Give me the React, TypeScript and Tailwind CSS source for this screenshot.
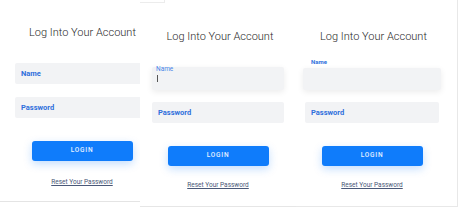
import type { ReactNode } from "react";

const font = { fontFamily: "Roboto, 'Liberation Sans', sans-serif" };

function Title({ className = "" }: { className?: string }) {
  return <h1 className={`text-center text-[11px] font-light leading-[16px] text-[#2a2a2a] ${className}`}>Log Into Your Account</h1>;
}

function Field({ className = "", children }: { className?: string; children?: ReactNode }) {
  return <div className={`rounded-[2px] bg-[#f2f3f5] ${className}`}>{children}</div>;
}

function Label({ children }: { children: ReactNode }) {
  return <span className="text-[7.5px] font-bold leading-[8px] text-[#2f6fdc]">{children}</span>;
}

function LoginButton({ className = "" }: { className?: string }) {
  return (
    <button className={`flex h-[20px] w-[101px] items-center justify-center self-center rounded-[3px] bg-[#0f7cfb] text-[6.5px] font-medium tracking-[0.8px] text-white/90 shadow-[0_3px_8px_rgba(15,124,251,0.25)] ${className}`}>
      LOGIN
    </button>
  );
}

function Reset({ className = "" }: { className?: string }) {
  return <a className={`self-center text-[6.5px] leading-[10px] text-[#4a5878] underline ${className}`}>Reset Your Password</a>;
}

export default function App() {
  return (
    <div className="flex h-[209px] w-[474px] overflow-hidden bg-white" style={font}>
      {/* first: idle */}
      <div className="h-[202px] w-[140px] shrink-0 overflow-hidden border-b border-[#e4e4e4]">
        <div className="box-content flex w-[134px] flex-col pl-[15px]">
          <Title className="mt-[25px] pl-[1px]" />
          <Field className="mt-[22px] flex h-[21px] items-center pl-[6px]">
            <Label>Name</Label>
          </Field>
          <Field className="mt-[13px] flex h-[21px] items-center pl-[6px]">
            <Label>Password</Label>
          </Field>
          <LoginButton className="mt-[23px]" />
          <Reset className="mt-[16px]" />
        </div>
      </div>

      {/* second: focusing name */}
      <div className="relative flex h-[207px] w-[156px] shrink-0 flex-col border-b border-[#e6e6e6] px-[12px]">
        <div className="absolute left-0 top-0 h-[3px] w-[25px] border-b border-r border-[#ececec]" />
        <Title className="mt-[29px] pl-[4px]" />
        <Field className="mt-[22px] flex h-[23px] flex-col pl-[4px] shadow-[0_2px_6px_rgba(0,0,0,0.08)]">
          <span className="mt-[-1px] text-[6.5px] leading-[7px] text-[#4a86e8]">Name</span>
          <span className="ml-[1px] mt-[2px] h-[7px] w-[1px] bg-[#555]" />
        </Field>
        <Field className="mt-[12px] flex h-[21px] items-center pl-[6px]">
          <Label>Password</Label>
        </Field>
        <LoginButton className="mt-[23px]" />
        <Reset className="mt-[14px]" />
      </div>

      {/* third: label floated */}
      <div className="flex h-[207px] w-[162px] shrink-0 flex-col border-b border-r border-[#e8e8e8] pl-[7px] pr-[16px]">
        <Title className="mt-[29px] pl-[3px]" />
        <span className="ml-[8px] mt-[13px] text-[6px] font-bold leading-[8px] text-[#2f6fdc]">Name</span>
        <Field className="mt-[2px] h-[22px] shadow-[0_2px_6px_rgba(0,0,0,0.08)]" />
        <Field className="mx-[2px] mt-[12px] flex h-[21px] items-center pl-[6px]">
          <Label>Password</Label>
        </Field>
        <LoginButton className="mt-[23px]" />
        <Reset className="mt-[14px]" />
      </div>
    </div>
  );
}
